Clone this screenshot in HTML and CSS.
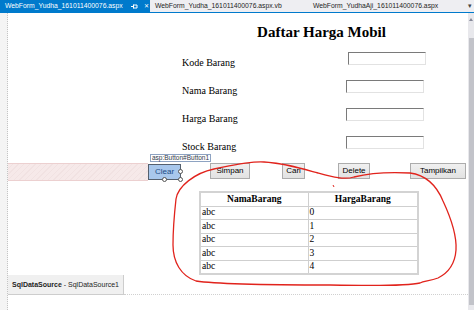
FILE: index.html
```html
<!DOCTYPE html>
<html>
<head>
<meta charset="utf-8">
<link rel="stylesheet" href="styles.css">
</head>
<body>
<div class="window">
  <div class="tabbar">
    <div class="tab active">
      <span class="tab-title">WebForm_Yudha_161011400076.aspx</span>
      <svg class="pin" width="7" height="5" viewBox="0 0 7 5"><path d="M0 2.5H2.5M2.5 0.5V4.5M2.5 1H6V4H2.5" fill="none" stroke="#fff" stroke-width="1"/></svg>
      <span class="close">✕</span>
    </div>
    <div class="tab t2">WebForm_Yudha_161011400076.aspx.vb</div>
    <div class="tab t3">WebForm_YudhaAji_161011400076.aspx</div>
    <div class="tab-menu">▾</div>
  </div>
  <div class="main">
    <div class="gutter"></div>
    <div class="canvas">
      <div class="form">
        <h1 class="title">Daftar Harga Mobil</h1>
        <div class="fields">
          <span class="label">Kode Barang</span><span class="input first"></span>
          <span class="label">Nama Barang</span><span class="input"></span>
          <span class="label">Harga Barang</span><span class="input"></span>
          <span class="label">Stock Barang</span><span class="input"></span>
        </div>
      </div>
      <div class="buttons">
        <div class="glyph"></div>
        <div class="sel-wrap">
          <div class="btn clear">Clear</div>
          <span class="tag">asp:Button#Button1</span>
          <span class="handle h-rm"></span>
          <span class="handle h-bm"></span>
          <span class="handle h-br"></span>
        </div>
        <div class="btn simpan">Simpan</div>
        <div class="btn cari">Cari</div>
        <div class="btn delete">Delete</div>
        <div class="btn tampilkan">Tampilkan</div>
      </div>
      <table class="grid">
        <tr class="head"><th>NamaBarang</th><th>HargaBarang</th></tr>
        <tr><td>abc</td><td>0</td></tr>
        <tr><td>abc</td><td>1</td></tr>
        <tr><td>abc</td><td>2</td></tr>
        <tr><td>abc</td><td>3</td></tr>
        <tr><td>abc</td><td>4</td></tr>
      </table>
      <div class="footer">
        <div class="sqlds"><b>SqlDataSource</b> - SqlDataSource1</div>
        <div class="rule"></div>
      </div>
    </div>
    <div class="scrollbar">
      <div class="arrow"></div>
      <div class="thumb"></div>
    </div>
  </div>
  <svg class="ink" width="474" height="310" viewBox="0 0 474 310">
    <path d="M176 199 C178 186 195 173 214 169 C234 165 250 161 264 162 C284 163 300 168 318 173 C333 177 344 180 354 177 C370 173 392 172 410 173 C425 175 436 184 443 201 C450 216 457 234 456 250 C455 264 448 273 438 278 C430 281 424 281 420 283 C408 286 380 286 330 285 C280 285 222 285 196 281 C181 276 173 262 173 245 C173 226 175 208 176 199 Z" fill="none" stroke="#e1231c" stroke-width="1.3"/>
    <path d="M333 185 L334 187" stroke="#e1231c" stroke-width="1"/>
  </svg>
</div>
</body>
</html>
```
FILE: styles.css
```css
* { box-sizing: border-box; }
html, body { margin: 0; padding: 0; }
body { width: 474px; height: 310px; overflow: hidden; background: #fff; }

.window {
  position: relative;
  width: 474px;
  height: 310px;
  display: flex;
  flex-direction: column;
  font-family: "Liberation Sans", Arial, sans-serif;
}

/* tab well */
.tabbar {
  height: 13px;
  flex: none;
  display: flex;
  align-items: stretch;
  background: #eeeef2;
  border-bottom: 1px solid #007acc;
  font-size: 6.8px;
  line-height: 12px;
  color: #1e1e1e;
  white-space: nowrap;
}
.tab { flex: none; }
.tab.active {
  width: 150px;
  background: #007acc;
  color: #fff;
  padding-left: 5px;
  display: flex;
  align-items: center;
}
.tab-title { width: 125px; }
.pin { margin-left: 1px; }
.close { margin-left: 6px; font-size: 6px; line-height: 12px; }
.tab.t2 { padding-left: 5px; width: 163px; }
.tab.t3 { width: 150px; }
.tab-menu { margin-left: auto; width: 6px; font-size: 7px; color: #444; }

.main {
  flex: 1;
  display: flex;
  min-height: 0;
}
.gutter {
  width: 8px;
  flex: none;
  background: #f4f4f4;
  border-right: 1px dotted #c4c4c4;
}
.canvas {
  flex: 1;
  min-width: 0;
  font-family: "Liberation Serif", "Times New Roman", serif;
  color: #000;
}
.scrollbar {
  width: 6px;
  flex: none;
  background: #e8e8ec;
  display: flex;
  flex-direction: column;
  align-items: center;
}
.arrow {
  margin-top: 5px;
  width: 0; height: 0;
  border-left: 2px solid transparent;
  border-right: 2px solid transparent;
  border-bottom: 3px solid #868999;
}
.thumb {
  margin-top: 17px;
  width: 5px;
  height: 267px;
  background: #c2c3c9;
}

/* form */
.form {
  margin-left: 174px;
  width: 279px;
}
.title {
  margin: 10px 0 0;
  font-size: 15px;
  line-height: 18px;
  font-weight: bold;
  text-align: center;
}
.fields {
  margin-top: 8px;
  display: grid;
  grid-template-columns: 164px 78px;
  grid-auto-rows: 28px;
}
.label {
  font-size: 10px;
  line-height: 28px;
}
.input {
  margin-top: 3px;
  height: 13px;
  width: 78px;
  background: #fff;
  border-top: 1px solid #7a7a7a;
  border-left: 1px solid #7a7a7a;
  border-right: 1px solid #e2e2e2;
  border-bottom: 1px solid #e2e2e2;
}
.input.first { margin-left: 2px; }

/* buttons */
.buttons {
  height: 20px;
  display: flex;
  align-items: flex-start;
  font-family: "Liberation Sans", Arial, sans-serif;
  font-size: 8px;
}
.glyph {
  margin-top: 2px;
  width: 140px;
  height: 18px;
  background: repeating-linear-gradient(135deg, #f6e9e9 0 3px, #f1e2e2 3px 4px);
  border-top: 1px solid #ecd0d0;
  border-bottom: 1px solid #ecd0d0;
}
.sel-wrap {
  position: relative;
  margin-top: 3px;
}
.btn {
  height: 16px;
  line-height: 14px;
  text-align: center;
  background: linear-gradient(#f0f0f0, #e2e2e2);
  border: 1px solid #acacac;
  color: #000;
  white-space: nowrap;
}
.btn.clear {
  width: 33px;
  background: #a8c7ec;
  border: 1px solid #55606e;
  color: #1d4c86;
}
.tag {
  position: absolute;
  left: 2px;
  top: -10px;
  height: 8px;
  padding: 0 1px;
  font-size: 6.5px;
  line-height: 6px;
  color: #30394a;
  background: #fff;
  border: 1px solid #8ea3c2;
  white-space: nowrap;
}
.handle {
  position: absolute;
  width: 5px;
  height: 5px;
  border-radius: 50%;
  background: #fff;
  border: 1px solid #555;
}
.h-rm { left: 30px; top: 5px; }
.h-bm { left: 14px; top: 13px; }
.h-br { left: 30px; top: 13px; }
.btn.simpan { margin-top: 2px; margin-left: 29px; width: 40px; }
.btn.cari { margin-top: 2px; margin-left: 32px; width: 23px; }
.btn.delete { margin-top: 2px; margin-left: 33px; width: 32px; }
.btn.tampilkan { margin-top: 2px; margin-left: 40px; width: 56px; }

/* grid */
.grid {
  margin: 10px 0 0 191px;
  width: 220px;
  border-collapse: collapse;
  border: 2px solid #d3d3d3;
  font-size: 9.5px;
  line-height: 11px;
}
.grid th, .grid td {
  border: 1px solid #cfcfcf;
  padding: 0 1px;
  text-align: left;
}
.grid th {
  text-align: center;
  font-weight: bold;
  height: 14px;
}
.grid th:first-child, .grid td:first-child { width: 108px; }
.grid td { height: 13.6px; }

/* footer */
.footer {
  display: flex;
  align-items: flex-end;
}
.sqlds {
  flex: none;
  width: 116px;
  height: 20px;
  padding-left: 4px;
  line-height: 19px;
  font-family: "Liberation Sans", Arial, sans-serif;
  font-size: 7px;
  color: #1e1e1e;
  background: #f0f0f0;
  border-right: 1px solid #cdcdcd;
  border-bottom: 1px solid #cdcdcd;
  white-space: nowrap;
}
.rule {
  flex: 1;
  border-bottom: 1px dotted #d0d0d0;
}

.ink {
  position: absolute;
  left: 0;
  top: 0;
  pointer-events: none;
}
```
